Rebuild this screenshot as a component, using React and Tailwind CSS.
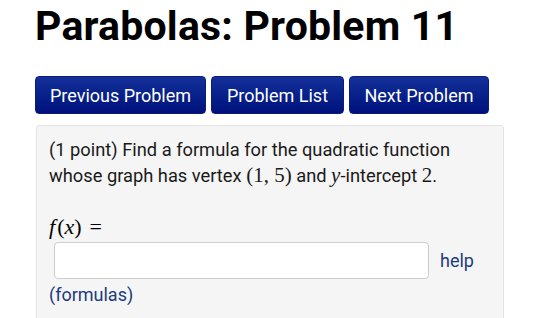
export default function App() {
    const mathFont = { fontFamily: '"Liberation Serif", "DejaVu Serif", serif' };
    const buttons = [
        ['Previous Problem', 'w-[171px]'],
        ['Problem List', 'w-[133px]'],
        ['Next Problem', 'w-[140px]'],
    ];
    return (
        <div className="w-[540px] h-[318px] overflow-hidden bg-white font-['Roboto',sans-serif] text-black">
            <div className="pl-[35px] pr-[36px]">
                <h1 className="pt-[3px] text-[41px] leading-[46px] font-bold tracking-[0.2px] whitespace-nowrap">Parabolas: Problem 11</h1>
                <div className="mt-[27px] flex gap-[5px]">
                    {buttons.map(([label, w]) => (
                        <button key={label} className={`${w} h-[38px] whitespace-nowrap rounded-[4px] border border-[#0a1d7a] bg-gradient-to-b from-[#15309a] to-[#000f7c] text-white text-[18px]`}>
                            {label}
                        </button>
                    ))}
                </div>
                <div className="mt-[11px] ml-[1px] border border-[#e3e3e3] rounded-t-[3px] bg-[#f5f5f5] pl-[12px] pr-[14px] pt-[11px] h-[220px]">
                    <p className="text-[18.3px] leading-[26px] text-[#1a1a1a]">
                        (1 point) Find a formula for the quadratic function whose graph has vertex{' '}
                        <span className="text-[21px] leading-none" style={mathFont}>(1, 5)</span> and{' '}
                        <span className="text-[21px] leading-none italic" style={mathFont}>y</span>-intercept{' '}
                        <span className="text-[21px] leading-none" style={mathFont}>2</span>.
                    </p>
                    <div className="mt-[25px] text-[22px] leading-[26px] flex items-baseline" style={mathFont}>
                        <i>f</i><span className="ml-[2px]">(</span><i>x</i><span>)</span><span className="ml-[8px]">=</span>
                    </div>
                    <div className="mt-[2px] flex items-center">
                        <div className="ml-[5px] w-[375px] h-[37px] bg-white border border-[#cccccc] rounded-[4px]" />
                        <a href="#" className="ml-[11px] text-[18px] text-[#1b3b7e]">help</a>
                    </div>
                    <a href="#" className="mt-[3px] block text-[18px] leading-[26px] text-[#1b3b7e]">(formulas)</a>
                </div>
            </div>
        </div>
    );
}
